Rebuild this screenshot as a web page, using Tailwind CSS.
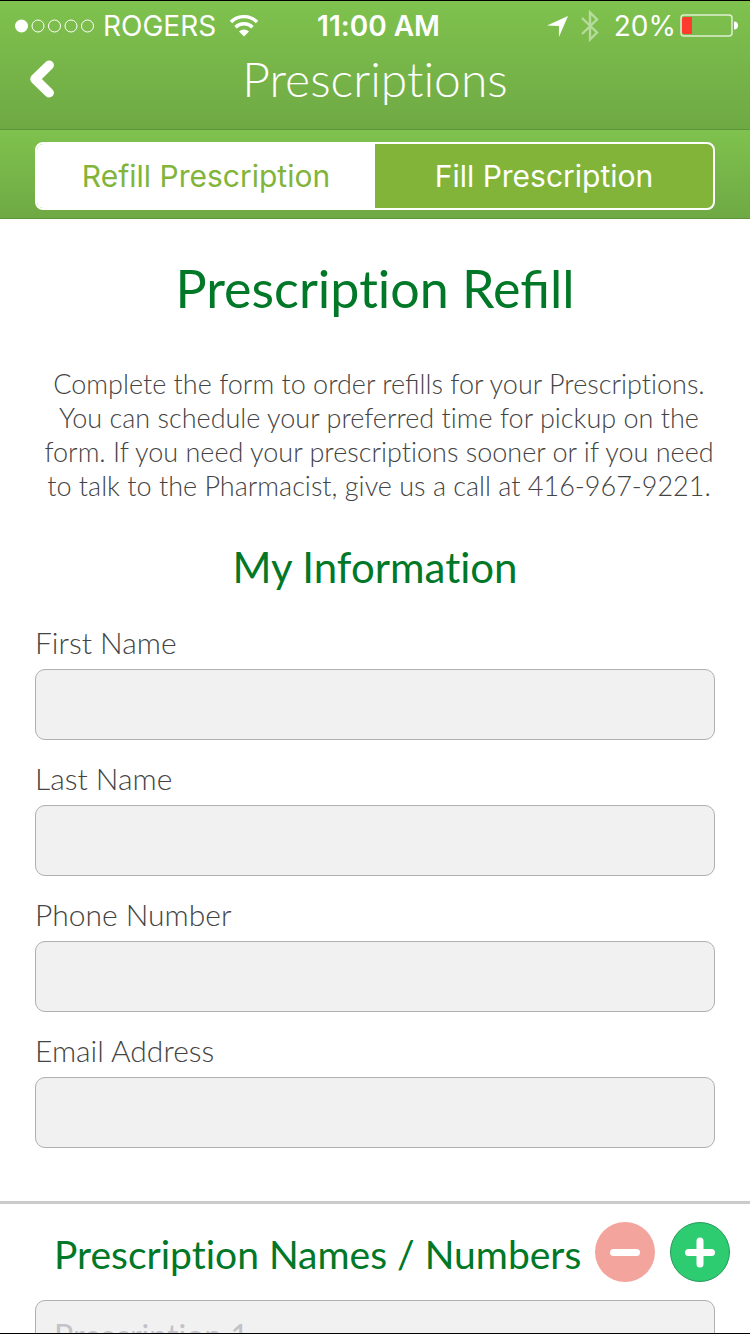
<!DOCTYPE html>
<html lang="en">
<head>
  <meta charset="UTF-8">
  <meta name="viewport" content="width=device-width, initial-scale=1.0">
  <title>Prescriptions</title>
  <script src="https://cdn.jsdelivr.net/npm/@tailwindcss/browser@4"></script>
</head>
<body class="bg-white font-['Lato',sans-serif] text-[#444] [font-variant-ligatures:none]">
  <div class="h-screen flex flex-col overflow-hidden border-y border-black">

    <header class="shrink-0 bg-linear-to-b from-[#7fc24e] to-[#6fa944] border-b border-[#5f953a] text-white">
      <!-- status bar -->
      <div class="grid grid-cols-3 items-center h-12 pt-0.5 pl-[15px] pr-3 font-['Inter',sans-serif] text-[28px]">
        <div class="flex items-center">
          <svg class="w-20 h-4 shrink-0" viewBox="0 0 80 16" fill="none" stroke="#fff">
            <circle cx="6.5" cy="8" r="6.5" fill="#fff" stroke="none"/>
            <circle cx="23" cy="8" r="6"/>
            <circle cx="39.500" cy="8" r="6"/>
            <circle cx="56" cy="8" r="6"/>
            <circle cx="72.500" cy="8" r="6"/>
          </svg>
          <span class="ml-2">ROGERS</span>
          <svg class="ml-3.5 w-7 h-[22px] shrink-0" viewBox="0 0 28 22" fill="none" stroke="#fff" stroke-width="3.400">
            <path d="M1 7a18.500 18.500 0 0 1 26 0"/>
            <path d="M5.500 12.300a12 12 0 0 1 17 0"/>
            <path d="M14 21.500l-5-5a7 7 0 0 1 10 0z" fill="#fff" stroke="none"/>
          </svg>
        </div>
        <div class="pl-1 text-center font-semibold">11:00 AM</div>
        <div class="flex items-center justify-end">
          <svg class="w-[21px] h-[21px] shrink-0" viewBox="0 0 22 22" fill="#fff">
            <path d="M22 0L12.500 22V10.500L0 10z"/>
          </svg>
          <svg class="ml-3 w-5 h-8 shrink-0" viewBox="0 0 20 32" fill="none" stroke="#fff" stroke-opacity=".45" stroke-width="2.400">
            <path d="M2 8l15 14.500-7 7V2.500l7 7L2 24"/>
          </svg>
          <span class="ml-3.5">20%</span>
          <svg class="ml-1 w-[58px] h-6 shrink-0" viewBox="0 0 58 24" fill="none">
            <rect x="1" y="1" width="51" height="21" rx="3" stroke="#fff" stroke-opacity=".75" stroke-width="1.500"/>
            <path d="M4 3h8v17H4a2 2 0 0 1-2-2V5a2 2 0 0 1 2-2z" fill="#ff3b2f"/>
            <path d="M54 7.500a4 4 0 0 1 0 8z" fill="#fff"/>
          </svg>
        </div>
      </div>

      <div class="grid grid-cols-[1fr_auto_1fr] items-center h-20 px-[30px] pb-5">
        <button type="button" aria-label="Back" class="justify-self-start">
          <svg class="w-6 h-[38px]" viewBox="0 0 24 38" fill="none" stroke="#fff" stroke-width="9.500" stroke-linecap="round" stroke-linejoin="round">
            <path d="M19.200 5.200L5 19l14.200 13.800"/>
          </svg>
        </button>
        <h1 class="text-[48px] leading-[60px] font-light">Prescriptions</h1>
      </div>
    </header>

    <nav class="shrink-0 bg-linear-to-b from-[#7fc24e] to-[#6fa944] border-b border-[#5f953a] px-[35px] pt-3 pb-2">
      <div class="flex h-[68px] rounded-lg border-2 border-white bg-[#82b43a] overflow-hidden font-['Inter',sans-serif] text-[30px]">
        <button type="button" class="flex-1 bg-white text-[#82b43a]">Refill Prescription</button>
        <button type="button" class="flex-1 text-white">Fill Prescription</button>
      </div>
    </nav>

    <main class="flex-1 min-h-0 overflow-hidden">
      <form>
        <section class="px-[35px] pt-[37px] pb-[53px]">
          <h2 class="text-center text-[52px] leading-[64px] text-[#007827]">Prescription <span class="[font-variant-ligatures:normal]">Refill</span></h2>
          <p class="mt-[47px] -mx-2 pl-2 text-center text-[27px] leading-[34px] font-light">
            Complete the form to order <span class="[font-variant-ligatures:normal]">refills</span> for your Prescriptions.<br>
            You can schedule your preferred time for pickup on the<br>
            form. If you need your prescriptions sooner or if you need<br>
            to talk to the Pharmacist, give us a call at 416-967-9221.
          </p>
          <h3 class="mt-[38px] text-center text-[42px] leading-[52px] text-[#007827]">My Information</h3>

          <div class="mt-[29px] flex flex-col gap-[18px] text-[30px] font-light">
            <div class="flex flex-col gap-[7px]">
              <label for="firstName" class="leading-10">First Name</label>
              <input type="text" id="firstName" class="w-full h-[71px] px-5 rounded-[10px] border border-[#b0b0b0] bg-[#f1f1f1]">
            </div>
            <div class="flex flex-col gap-[7px]">
              <label for="lastName" class="leading-10">Last Name</label>
              <input type="text" id="lastName" class="w-full h-[71px] px-5 rounded-[10px] border border-[#b0b0b0] bg-[#f1f1f1]">
            </div>
            <div class="flex flex-col gap-[7px]">
              <label for="phone" class="leading-10">Phone Number</label>
              <input type="tel" id="phone" class="w-full h-[71px] px-5 rounded-[10px] border border-[#b0b0b0] bg-[#f1f1f1]">
            </div>
            <div class="flex flex-col gap-[7px]">
              <label for="email" class="leading-10">Email Address</label>
              <input type="email" id="email" class="w-full h-[71px] px-5 rounded-[10px] border border-[#b0b0b0] bg-[#f1f1f1]">
            </div>
          </div>
        </section>

        <section class="border-t-3 border-[#cbcbcb] pt-[18px]">
          <div class="flex items-center justify-between pl-[54px] pr-5">
            <h3 class="pt-1 text-[39px] leading-[56px] text-[#007827] whitespace-nowrap">Prescription Names / Numbers</h3>
            <div class="flex gap-[15px] shrink-0">
              <button type="button" aria-label="Remove prescription">
                <svg class="w-[60px] h-[60px]" viewBox="0 0 60 60" stroke="#fff" stroke-width="7" stroke-linecap="round">
                  <circle cx="30" cy="30" r="30" fill="#f3a59d" stroke="none"/>
                  <path d="M18.500 30.500h23"/>
                </svg>
              </button>
              <button type="button" aria-label="Add prescription">
                <svg class="w-[60px] h-[60px]" viewBox="0 0 60 60" stroke="#fff" stroke-width="7" stroke-linecap="round">
                  <circle cx="30" cy="30" r="29.500" fill="#2ecc71" stroke="#27995a" stroke-width="1"/>
                  <path d="M18.500 30.500h23M30 19v23"/>
                </svg>
              </button>
            </div>
          </div>
          <div class="px-[35px] pt-[18px]">
            <input type="text" aria-label="Prescription 1" placeholder="Prescription 1" class="w-full h-[71px] px-[18px] rounded-[10px] border border-[#b0b0b0] bg-[#f1f1f1] text-[32px] placeholder:text-[#c2c2c8]">
          </div>
        </section>
      </form>
    </main>
  </div>
</body>
</html>
